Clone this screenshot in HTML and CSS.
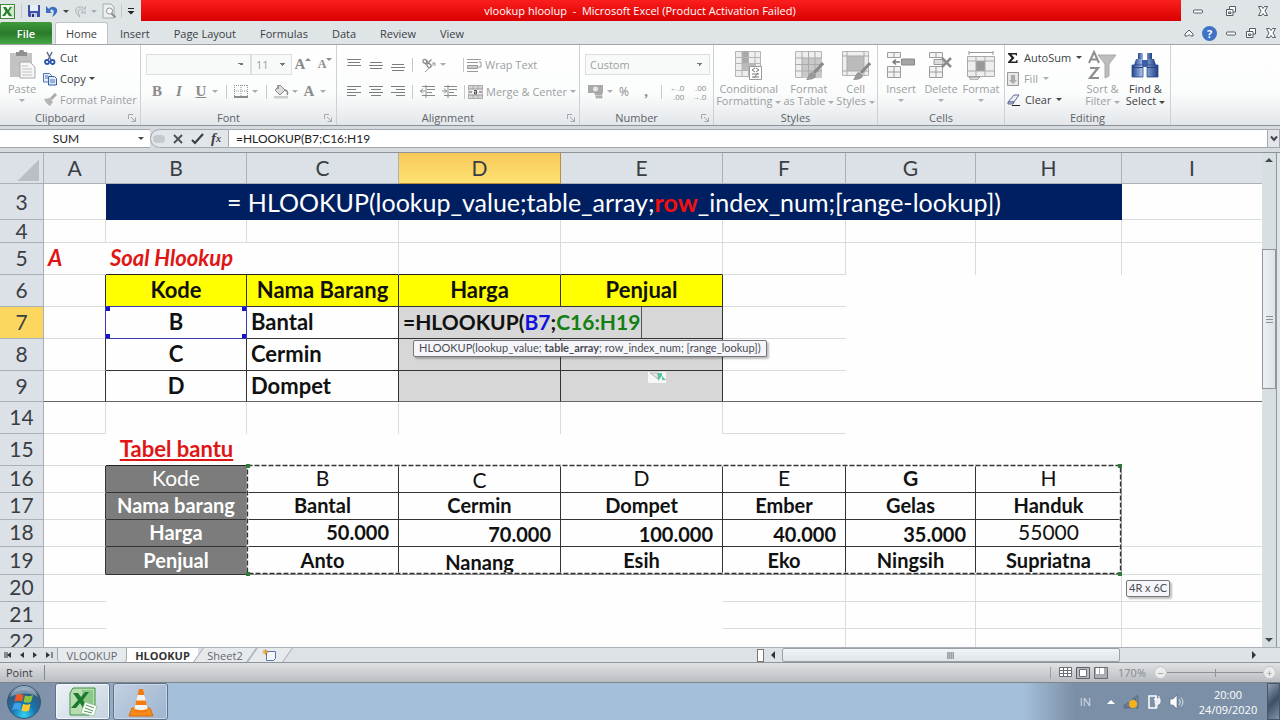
FILE: index.html
```html
<!DOCTYPE html>
<html>
<head>
    <meta charset="utf-8">
    <title>vlookup hloolup - Microsoft Excel</title>
    <link rel="stylesheet" href="styles.css">
</head>
<body>
    <svg class="defs">
        <defs>
            <symbol id="min" viewBox="0 0 12 12"><rect x="1.5" y="5" width="9" height="3" rx="1" fill="#fff" stroke="#555b63"/></symbol>
            <symbol id="restore" viewBox="0 0 12 12"><path d="M4.500 1.500h6v5.500h-6z" fill="#fff" stroke="#555b63"/><path d="M1.500 4.500h6.500v6H1.500zM3.500 7h2.500v1.500H3.500z" fill="#fff" stroke="#555b63"/></symbol>
            <symbol id="close" viewBox="0 0 12 12"><path d="M1.500 1.500h3L6 3.500l1.500-2h3L8 6l2.500 4.500h-3L6 8.500l-1.500 2h-3L4 6z" fill="#fff" stroke="#555b63"/></symbol>
            <symbol id="launch" viewBox="0 0 8 8"><path d="M.5 5V.5H5M3 3l4 4M7.500 3.500v4h-4" fill="none" stroke="#a5a9ae"/></symbol>
            <linearGradient id="bino" x1="0" x2="1" y1="0" y2="0"><stop offset="0" stop-color="#24448c"/><stop offset=".4" stop-color="#a9c4ee"/><stop offset="1" stop-color="#1f3f86"/></linearGradient>
            <radialGradient id="orb" cx=".5" cy=".9" r=".9"><stop offset="0" stop-color="#35d3f5"/><stop offset=".4" stop-color="#1673ad"/><stop offset=".8" stop-color="#34597c"/><stop offset="1" stop-color="#b4c8d8"/></radialGradient>
        </defs>
    </svg>

    <!-- title bar -->
    <div class="titlebar">
        <div class="quick">
            <svg width="16" height="16" viewBox="0 0 16 16"><rect x=".5" y="1.500" width="14" height="14" fill="#f4faf2" stroke="#3c8a3a"/><path d="M9 3h5v11H9" fill="#cfe6c8"/><path d="M3 4h3l2 3 2-3h2L9 8.500l3 4.500H9l-2-3-2 3H2l3.500-4.500z" fill="#26802b"/></svg>
            <i class="bar"></i>
            <svg width="14" height="14" viewBox="0 0 14 14"><path d="M1 1h12v12H2L1 12z" fill="#3b4fa8"/><path d="M3 1h8v6H3z" fill="#e8eefb"/><path d="M4 9h6v4H4z" fill="#c5cbe0"/><path d="M5 10h2v3H5z" fill="#26336f"/></svg>
            <svg width="12" height="14" viewBox="0 0 12 14"><path d="M0 2v7h6L4 7c2-3 5-1 3 4l-1 2c6-3 7-9 2-10-2-.5-4 .5-5 2z" fill="#3b6fc4"/></svg>
            <i class="caret dark"></i>
            <svg width="12" height="14" viewBox="0 0 12 14"><path d="M12 2v7H7l2-2C7 4 3 5 5 11l1 2C0 9 1 3 5 3c2-.5 4 0 5 2z" fill="#d9dcdf" stroke="#9fa4a9" stroke-width=".7"/></svg>
            <i class="caret"></i>
            <svg width="14" height="16" viewBox="0 0 14 16"><path d="M1 1h8l3 3v11H1z" fill="#eceff0" stroke="#a5a9ad"/><circle cx="7.500" cy="8" r="3" fill="#fff" stroke="#8d9196"/><path d="M9.500 10.500l4 4" stroke="#8d9196" stroke-width="2"/></svg>
            <i class="bar"></i>
            <svg width="8" height="8" viewBox="0 0 8 8"><path d="M1 1.500h6" stroke="#222"/><path d="M.5 4h7L4 7.500z" fill="#222"/></svg>
        </div>
        <div class="title">vlookup hloolup&nbsp; -&nbsp; Microsoft Excel (Product Activation Failed)</div>
        <div class="winbtns">
            <button><svg width="12" height="12"><use href="#min"/></svg></button>
            <button><svg width="12" height="12"><use href="#restore"/></svg></button>
            <button><svg width="12" height="12"><use href="#close"/></svg></button>
        </div>
    </div>

    <!-- ribbon tabs -->
    <div class="tabs">
        <button class="file">File</button>
        <button class="tab active">Home</button>
        <button class="tab">Insert</button>
        <button class="tab">Page Layout</button>
        <button class="tab">Formulas</button>
        <button class="tab">Data</button>
        <button class="tab">Review</button>
        <button class="tab">View</button>
        <div class="docbtns">
            <button><svg width="10" height="10" viewBox="0 0 10 10"><path d="M1 6l4-4 4 4v2H6.500L5 6.500 3.500 8H1z" fill="#fff" stroke="#555b63"/></svg></button>
            <button class="help">?</button>
            <button><svg width="12" height="12"><use href="#min"/></svg></button>
            <button><svg width="12" height="12"><use href="#restore"/></svg></button>
            <button><svg width="12" height="12"><use href="#close"/></svg></button>
        </div>
    </div>

    <div class="ribbon">
        <div class="group clipboard">
            <div class="gbody">
                <button class="big off">
                    <svg width="28" height="30" viewBox="0 0 28 30"><path d="M2 3h22v24H2z" fill="#c3c3c3"/><path d="M8 2h3c0-3 5-3 5 0h3v4H8z" fill="#909090"/><path d="M12 12h10l5 5v11H12z" fill="#f6f6f6" stroke="#a9a9a9"/><path d="M14 16h6M14 19h10M14 22h10M14 25h10" stroke="#c0c0c0"/></svg>
                    <span>Paste</span><i class="caret"></i>
                </button>
                <div class="stack">
                    <button class="small"><svg width="14" height="14" viewBox="0 0 14 14"><path d="M4 1l4 8M9 1L5 9" stroke="#5b6f8e" stroke-width="1.500"/><circle cx="4" cy="11" r="2" fill="none" stroke="#2a55a8" stroke-width="1.800"/><circle cx="9.500" cy="11" r="2" fill="none" stroke="#2a55a8" stroke-width="1.800"/></svg>Cut</button>
                    <button class="small"><svg width="14" height="14" viewBox="0 0 14 14"><path d="M.5 1.500h6l2 2V10h-8z" fill="#e7effb" stroke="#4b76b8"/><path d="M5.500 4.500h6l2 2V13h-8z" fill="#dfe9f9" stroke="#335fa6"/><path d="M7 8h5M7 10h5M2 4h3M2 6h3" stroke="#4b76b8"/></svg>Copy<i class="caret"></i></button>
                    <button class="small off"><svg width="14" height="14" viewBox="0 0 14 14"><path d="M13 1L8 6" stroke="#aaa" stroke-width="3"/><path d="M1 6l6-1 3 4-3 4c-2-1-4-3-6-7z" fill="#b5b5b5"/></svg>Format Painter</button>
                </div>
            </div>
            <div class="glabel">Clipboard<svg class="launch" width="8" height="8"><use href="#launch"/></svg></div>
        </div>

        <div class="group font">
            <div class="gbody rows">
                <div class="row">
                    <select class="w-font" aria-label="Font"><option></option></select>
                    <select class="w-size" aria-label="Font size"><option>11</option></select>
                    <button class="ic serif">A<svg width="6" height="16" viewBox="0 0 6 16"><path d="M0 4l3-3 3 3z" fill="#8b8b8b"/></svg></button>
                    <button class="ic serif less">A<svg width="6" height="16" viewBox="0 0 6 16"><path d="M0 1h6L3 4z" fill="#8b8b8b"/></svg></button>
                </div>
                <div class="row">
                    <button class="ic serif">B</button>
                    <button class="ic serif it">I</button>
                    <button class="ic serif un">U</button>
                    <i class="caret"></i><i class="bar"></i>
                    <button class="ic"><svg width="14" height="13" viewBox="0 0 14 13"><path d="M.5 0v12M7 0v12M13.500 0v12M0 .5h14M0 6h14" stroke="#999" stroke-dasharray="1 1"/><path d="M0 12h14" stroke="#666" stroke-width="1.500"/></svg></button>
                    <i class="caret"></i><i class="bar"></i>
                    <button class="ic"><svg width="16" height="15" viewBox="0 0 16 15"><path d="M2 6l5-5 5 5-5 5z" fill="#ddd" stroke="#888"/><path d="M5 5V1M12 6c3 1 3 3 2 5" fill="none" stroke="#888" stroke-width="1.500"/><path d="M1 12h14v2.500H1z" fill="#ccc"/></svg></button>
                    <i class="caret"></i>
                    <button class="ic serif plain">A</button>
                    <i class="caret"></i>
                </div>
            </div>
            <div class="glabel">Font<svg class="launch" width="8" height="8"><use href="#launch"/></svg></div>
        </div>

        <div class="group align">
            <div class="gbody rows">
                <div class="row">
                    <button class="ic"><svg width="14" height="13" viewBox="0 0 14 13"><path d="M0 1.500h14M1 4.500h12M0 7.500h14" stroke="#7d7d7d"/></svg></button>
                    <button class="ic"><svg width="14" height="13" viewBox="0 0 14 13"><path d="M1 4.500h12M0 7.500h14M1 10.500h12" stroke="#7d7d7d"/></svg></button>
                    <button class="ic"><svg width="14" height="13" viewBox="0 0 14 13"><path d="M1 6.500h12M0 9.500h14M1 12.500h12" stroke="#7d7d7d"/></svg></button>
                    <i class="bar"></i>
                    <button class="ic orient"><svg width="16" height="16" viewBox="0 0 16 16"><g fill="none" stroke="#8a8a8a" stroke-width="1.300"><ellipse cx="4" cy="4.500" rx="2.300" ry="1.800" transform="rotate(45 4 4.500)"/><path d="M6.500 3.500L4.500 7.500"/><ellipse cx="8" cy="8.500" rx="2.300" ry="1.800" transform="rotate(45 8 8.500)"/><path d="M10.500 2.500L7 6"/></g><path d="M4 15l10-9M11 6h3v3" stroke="#999" fill="none"/></svg><i class="caret"></i></button>
                    <i class="bar"></i>
                    <button class="small off"><svg width="15" height="14" viewBox="0 0 15 14"><path d="M0 1.500h14M0 4.500h11" stroke="#999"/><path d="M.5 7.500h10v3H.5z" fill="#ccc" stroke="#999"/><path d="M0 13.500h11M11 9h3V4h-2" stroke="#999" fill="none"/></svg>Wrap Text</button>
                </div>
                <div class="row">
                    <button class="ic"><svg width="14" height="13" viewBox="0 0 14 13"><path d="M0 1.500h14M0 4.500h9M0 7.500h14M0 10.500h9" stroke="#7d7d7d"/></svg></button>
                    <button class="ic"><svg width="14" height="13" viewBox="0 0 14 13"><path d="M0 1.500h14M2 4.500h10M0 7.500h14M2 10.500h10" stroke="#7d7d7d"/></svg></button>
                    <button class="ic"><svg width="14" height="13" viewBox="0 0 14 13"><path d="M0 1.500h14M5 4.500h9M0 7.500h14M5 10.500h9" stroke="#7d7d7d"/></svg></button>
                    <i class="bar"></i>
                    <button class="ic indent"><svg width="15" height="13" viewBox="0 0 15 13"><path d="M2 1.500h13M7 4.500h8M7 7.500h5M2 10.500h13M6 0v13M0 6h5M3 3.500L.5 6 3 8.500" stroke="#8a8a8a" fill="none"/></svg></button>
                    <button class="ic indent"><svg width="15" height="13" viewBox="0 0 15 13"><path d="M2 1.500h13M7 4.500h8M7 7.500h5M2 10.500h13M6 0v13M0 6h5M2 3.500L4.500 6 2 8.500" stroke="#8a8a8a" fill="none"/></svg></button>
                    <i class="bar"></i>
                    <button class="small off"><svg width="15" height="14" viewBox="0 0 15 14"><path d="M.5.500h14v13H.5z" fill="#d5d5d5" stroke="#aaa"/><path d="M5 0v4M10 0v4M5 10v4M10 10v4" stroke="#aaa"/><path d="M0 4h15v6H0z" fill="#eee" stroke="#999"/><path d="M6 5.500h2.500V9H6.500V7h2M1 7h3M11 7h3" stroke="#555" fill="none"/></svg>Merge &amp; Center<i class="caret"></i></button>
                </div>
            </div>
            <div class="glabel">Alignment<svg class="launch" width="8" height="8"><use href="#launch"/></svg></div>
        </div>

        <div class="group number">
            <div class="gbody rows">
                <div class="row"><select class="w-num" aria-label="Number format"><option>Custom</option></select></div>
                <div class="row">
                    <button class="ic"><svg width="16" height="15" viewBox="0 0 16 15"><path d="M0 1h15v8H0z" fill="#aaa"/><circle cx="7.500" cy="5" r="2.500" fill="#e5e5e5"/><path d="M7 9h7v2H7zM8 12h6v2H8z" fill="#bbb" stroke="#888" stroke-width=".5"/></svg></button>
                    <i class="caret"></i>
                    <button class="ic pct">%</button>
                    <button class="ic serif">,</button>
                    <i class="bar"></i>
                    <button class="ic dec">←.0<br>.00</button>
                    <button class="ic dec">.00<br>→.0</button>
                </div>
            </div>
            <div class="glabel">Number<svg class="launch" width="8" height="8"><use href="#launch"/></svg></div>
        </div>

        <div class="group styles">
            <div class="gbody">
                <button class="big off">
                    <svg width="30" height="30" viewBox="0 0 30 30"><path d="M1.500 1.500h25v25h-25z" fill="#eee" stroke="#b5b5b5"/><path d="M8 1h6v12H8z" fill="#a9a9a9"/><path d="M8 13h14v7H8z" fill="#bbb"/><path d="M1 7.500h26M1 13.500h26M1 20.500h26M8 1v26M14.500 1v26M21 1v26" stroke="#b5b5b5"/><path d="M15.500 16.500h12v13h-12z" fill="#fff" stroke="#999"/><path d="M21 18l-3 2 3 2M22 18l3 2-3 2M18 24h7M18 27h7M24 23l-4 5" stroke="#777" fill="none"/></svg>
                    <span>Conditional<br>Formatting <i class="caret"></i></span>
                </button>
                <button class="big off">
                    <svg width="30" height="30" viewBox="0 0 30 30"><path d="M1.500 1.500h26v26h-26z" fill="#eee" stroke="#b5b5b5"/><path d="M8 8h20v20H8z" fill="#c9c9c9"/><path d="M1 8h27M1 14.500h27M1 21h27M8 1v27M14.500 1v27M21 1v27" stroke="#aaa"/><path d="M29 13L20 23" stroke="#888" stroke-width="3"/><path d="M12 30c2-2 2-7 6-8l4 3c0 4-5 5-10 5z" fill="#999"/></svg>
                    <span>Format<br>as Table <i class="caret"></i></span>
                </button>
                <button class="big off">
                    <svg width="30" height="30" viewBox="0 0 30 30"><path d="M1.500 1.500h26v24h-26z" fill="#eee" stroke="#b5b5b5"/><path d="M6 6h17v15H6z" fill="#bbb"/><path d="M1 6h27M1 21h27M6 1v25M23 1v25" stroke="#aaa"/><path d="M29 13L20 23" stroke="#888" stroke-width="3"/><path d="M12 30c2-2 2-7 6-8l4 3c0 4-5 5-10 5z" fill="#999"/></svg>
                    <span>Cell<br>Styles <i class="caret"></i></span>
                </button>
            </div>
            <div class="glabel">Styles</div>
        </div>

        <div class="group cells">
            <div class="gbody">
                <button class="big off">
                    <svg width="30" height="30" viewBox="0 0 30 30"><path d="M1.500 2.500h13v5h-13zM8 2.500v5M1.500 16.500h13v11h-13zM8 16.500v11M1.500 22h13" fill="#f2f2f2" stroke="#9c9c9c"/><path d="M15.500 9h13v6h-13z" fill="#a5a5a5" stroke="#888"/><path d="M7 12h7M10 9.500L7 12l3 2.500" stroke="#777" fill="none" stroke-width="1.500"/></svg>
                    <span>Insert</span><i class="caret"></i>
                </button>
                <button class="big off">
                    <svg width="30" height="30" viewBox="0 0 30 30"><path d="M3.500 2.500h13v5h-13zM10 2.500v5M3.500 16.500h13v11h-13zM10 16.500v11M3.500 22h13" fill="#f2f2f2" stroke="#9c9c9c"/><path d="M8 9.500h9v5H8z" fill="#ddd" stroke="#999"/><path d="M16 8l9 9M25 8l-9 9" stroke="#8b8b8b" stroke-width="2.500"/></svg>
                    <span>Delete</span><i class="caret"></i>
                </button>
                <button class="big off">
                    <svg width="30" height="30" viewBox="0 0 30 30"><path d="M3 1v4M3 2.500h24M27 1v4" stroke="#999"/><path d="M1.500 6.500h27v20h-27z" fill="#eee" stroke="#aaa"/><path d="M10 11h9v10h-9z" fill="#999"/><path d="M1 11h27M1 21h27M10 6v20M19 6v20" stroke="#aaa"/><path d="M3 27h11l-3 3H5z" fill="#ddd" stroke="#999"/></svg>
                    <span>Format</span><i class="caret"></i>
                </button>
            </div>
            <div class="glabel">Cells</div>
        </div>

        <div class="group editing">
            <div class="gbody">
                <div class="stack">
                    <button class="small"><svg width="12" height="12" viewBox="0 0 12 12"><path d="M1 1h9v2.500H9L8.500 2.500H4.500L7.500 6l-3.500 3.500h5L9.500 8h1v3H1v-1l3.500-4L1 2z" fill="#222"/></svg>AutoSum<i class="caret"></i></button>
                    <button class="small off"><svg width="12" height="14" viewBox="0 0 12 14"><path d="M.5.500h11v13H.5z" fill="#e6e6e6" stroke="#999"/><path d="M4 3h4v5h2l-4 4-4-4h2z" fill="#aaa"/></svg>Fill<i class="caret"></i></button>
                    <button class="small"><svg width="13" height="13" viewBox="0 0 13 13"><path d="M1 9l6-7h5L7 9z" fill="#e9edf8" stroke="#5e6b94"/><path d="M1 9v2h5l1-2z" fill="#c2cae4" stroke="#5e6b94"/><path d="M5 12.500h8" stroke="#222"/></svg>Clear<i class="caret"></i></button>
                </div>
                <button class="big off">
                    <svg width="30" height="30" viewBox="0 0 30 30"><path d="M11 5h18l-7 9v12l-4 2V14z" fill="#bdbdbd" stroke="#aaa"/><path d="M2 13L7 2l5 11M4 9.500h6" fill="none" stroke="#8e8e8e" stroke-width="2"/><path d="M3 18h8L3 28h9" fill="none" stroke="#8e8e8e" stroke-width="2.200"/></svg>
                    <span>Sort &amp;<br>Filter <i class="caret"></i></span>
                </button>
                <button class="big">
                    <svg width="30" height="30" viewBox="0 0 30 30"><path d="M8 3h5v6H8zM17 3h5v6h-5z" fill="url(#bino)"/><path d="M6 9h7v6H4zM17 9h7l2 6h-9z" fill="url(#bino)"/><path d="M12 10h6v7h-6z" fill="#3d5fa8"/><path d="M2 15h11v12H2zM17 15h11v12H17z" fill="url(#bino)" stroke="#2b478a" stroke-width=".8"/><path d="M2 17.500h11M17 17.500h11" stroke="#24407f"/></svg>
                    <span>Find &amp;<br>Select <i class="caret"></i></span>
                </button>
            </div>
            <div class="glabel">Editing</div>
        </div>
    </div>

    <!-- formula bar -->
    <div class="formula">
        <input class="namebox" value="SUM" aria-label="Name box">
        <button class="drop"><i class="caret dark"></i></button>
        <div class="fbtns">
            <i class="knob"></i>
            <button><svg width="12" height="12" viewBox="0 0 12 12"><path d="M2 2l8 8M10 2L2 10" stroke="#4a4e54" stroke-width="1.800"/></svg></button>
            <button><svg width="13" height="12" viewBox="0 0 13 12"><path d="M1 7l3 3 8-9" stroke="#3c4046" stroke-width="2.200" fill="none"/></svg></button>
            <button class="fx">f<sub>x</sub></button>
        </div>
        <input class="fx-input" value="=HLOOKUP(B7;C16:H19" aria-label="Formula bar">
        <button class="expand"><svg width="8" height="8" viewBox="0 0 8 8"><path d="M1 1.500L4 5l3-3.500" stroke="#3f444b" stroke-width="2" fill="none"/></svg></button>
    </div>

    <!-- sheet -->
    <div class="sheetarea">
        <div class="sheet">
            <table>
                <colgroup><col class="c0"><col class="ca"><col class="cb"><col class="cc"><col class="cd"><col class="ce"><col class="cf"><col class="cg"><col class="ch"><col></colgroup>
                <tr class="head"><th class="corner"></th><th>A</th><th>B</th><th>C</th><th class="on">D</th><th>E</th><th>F</th><th>G</th><th>H</th><th class="last">I</th></tr>
                <tr class="h36"><th>3</th><td class="b"></td><td colspan="7" class="navy">= HLOOKUP(lookup_value;table_array;<b>row</b>_index_num;[range-lookup])</td><td class="b"></td></tr>
                <tr class="h23"><th>4</th><td class="r b"></td><td class="r b"></td><td class="r b"></td><td class="r b"></td><td class="r b"></td><td class="r b"></td><td class="r b"></td><td class="r b"></td><td class="b"></td></tr>
                <tr class="h32"><th>5</th><td class="b red l">A</td><td class="kb red l">Soal&nbsp;Hlookup</td><td class="r kb"></td><td class="r kb"></td><td class="r kb"></td><td class="r b"></td><td class="r"></td><td class="r"></td><td></td></tr>
                <tr class="h32 y"><th>6</th><td class="b kr"></td><td class="k">Kode</td><td class="k">Nama Barang</td><td class="k">Harga</td><td class="k">Penjual</td><td class="b"></td><td></td><td></td><td></td></tr>
                <tr class="h32"><th class="on">7</th><td class="b kr"></td><td class="k ref">B<i></i></td><td class="k l">Bantal</td><td class="k gray edit"><div class="editor">=HLOOKUP(<span class="blue">B7</span>;<span class="green">C16:H19</span></div></td><td class="k gray"></td><td class="b"></td><td></td><td></td><td></td></tr>
                <tr class="h32"><th>8</th><td class="b kr"></td><td class="k">C</td><td class="k l">Cermin</td><td class="k gray"></td><td class="k gray"></td><td class="b"></td><td></td><td></td><td></td></tr>
                <tr class="h31 freeze"><th>9</th><td class="kr"></td><td class="k">D</td><td class="k l">Dompet</td><td class="k gray"></td><td class="k gray"></td><td></td><td></td><td></td><td></td></tr>
                <tr class="h32"><th>14</th><td class="r b"></td><td class="r"></td><td class="r"></td><td class="r"></td><td class="r"></td><td class="b"></td><td></td><td></td><td></td></tr>
                <tr class="h32"><th>15</th><td class="b"></td><td class="kb tabel">Tabel bantu</td><td></td><td></td><td></td><td></td><td></td><td></td><td></td></tr>
                <tr class="h27 n"><th>16</th><td class="b kr"></td><td class="k dk">Kode</td><td class="k">B</td><td class="k low">C</td><td class="k">D</td><td class="k">E</td><td class="k"><b>G</b></td><td class="k">H</td><td></td></tr>
                <tr class="h27"><th>17</th><td class="b kr"></td><td class="k dk">Nama barang</td><td class="k">Bantal</td><td class="k">Cermin</td><td class="k">Dompet</td><td class="k">Ember</td><td class="k">Gelas</td><td class="k">Handuk</td><td></td></tr>
                <tr class="h27"><th>18</th><td class="b kr"></td><td class="k dk">Harga</td><td class="k num">50.000</td><td class="k num low">70.000</td><td class="k num low">100.000</td><td class="k num low">40.000</td><td class="k num low">35.000</td><td class="k thin">55000</td><td class="b"></td></tr>
                <tr class="h28"><th>19</th><td class="b kr"></td><td class="k dk">Penjual</td><td class="k">Anto</td><td class="k low">Nanang</td><td class="k">Esih</td><td class="k">Eko</td><td class="k">Ningsih</td><td class="k">Supriatna</td><td class="b"></td></tr>
                <tr class="h27"><th>20</th><td class="b"></td><td></td><td></td><td></td><td></td><td class="r b"></td><td class="r b"></td><td class="r b"></td><td class="b"></td></tr>
                <tr class="h27"><th>21</th><td class="b"></td><td></td><td></td><td></td><td></td><td class="r b"></td><td class="r b"></td><td class="r b"></td><td class="b"></td></tr>
                <tr class="h27"><th>22</th><td></td><td></td><td></td><td></td><td></td><td class="r"></td><td class="r"></td><td class="r"></td><td></td></tr>
            </table>
            <!-- marching ants round C16:H19 -->
            <svg class="ants" width="876" height="112"><rect x="1.500" y="1.500" width="873" height="108" fill="none" stroke="#fff" stroke-width="2"/><rect x="1.500" y="1.500" width="873" height="108" fill="none" stroke="#333" stroke-width="1.300" stroke-dasharray="5 2"/><path d="M0 0h4v4H0zM872 0h4v4h-4zM0 108h4v4H0zM872 108h4v4h-4z" fill="#2d7a3a"/></svg>
            <div class="tip hint">HLOOKUP(lookup_value; <b>table_array</b>; row_index_num; [range_lookup])</div>
            <svg class="cursor" width="19" height="13" viewBox="0 0 19 13"><path d="M0 1h18v11H0z" fill="#f4f7f5"/><path d="M2 2h8v6z" fill="#e3e6e4" stroke="#9aa59f" stroke-width=".7"/><path d="M9 2h5v3l4 4h-4v-4l-4 5V4z" fill="#5cc4a0"/></svg>
            <div class="tip size">4R x 6C</div>
        </div>
        <div class="vscroll">
            <svg width="10" height="8" viewBox="0 0 10 8"><path d="M1 6l4-4 4 4z" fill="#444a52"/></svg>
            <div class="vtrack"><div class="vthumb"><i></i></div></div>
            <svg width="10" height="8" viewBox="0 0 10 8"><path d="M1 2l4 4 4-4z" fill="#444a52"/></svg>
        </div>
    </div>

    <!-- sheet tabs -->
    <div class="sheettabs">
        <div class="nav">
            <button><svg width="8" height="8" viewBox="0 0 8 8"><path d="M1 1v6M3 1v6" stroke="#333"/><path d="M7 1v6L3 4z" fill="#333"/></svg></button>
            <button><svg width="8" height="8" viewBox="0 0 8 8"><path d="M6 1v6L2 4z" fill="#333"/></svg></button>
            <button><svg width="8" height="8" viewBox="0 0 8 8"><path d="M2 1v6l4-3z" fill="#333"/></svg></button>
            <button><svg width="8" height="8" viewBox="0 0 8 8"><path d="M7 1v6" stroke="#333"/><path d="M1 1v6l4-3z" fill="#333"/></svg></button>
        </div>
        <button class="stab">VLOOKUP</button>
        <button class="stab active">HLOOKUP</button>
        <button class="stab slant">Sheet2</button>
        <button class="stab slant new"><svg width="16" height="12" viewBox="0 0 16 12"><path d="M4.500 2.500h9v7l-2 2h-7z" fill="#f2f6fd" stroke="#5b76a8"/><path d="M3.500 0v6M.5 3h6M1.500 1l4 4M5.500 1l-4 4" stroke="#e39a2e"/></svg></button>
        <div class="hscroll">
            <i class="split"></i>
            <svg width="8" height="10" viewBox="0 0 8 10"><path d="M6 1v8L2 5z" fill="#333"/></svg>
            <div class="htrack"><div class="hthumb"><i></i></div></div>
            <svg width="8" height="10" viewBox="0 0 8 10"><path d="M2 1v8l4-4z" fill="#333"/></svg>
        </div>
    </div>

    <div class="status">
        <span class="mode">Point</span>
        <div class="views">
            <button><svg width="13" height="11" viewBox="0 0 13 11"><path d="M.5.500h12v9H.5zM.5 3.500h12M.5 6.500h12M4.500 0v10M8.500 0v10" fill="#fff" stroke="#6a6e73"/></svg></button>
            <button><svg width="14" height="12" viewBox="0 0 14 12"><path d="M.5.500h13v11H.5z" fill="#b9bcc0" stroke="#5c6065"/><path d="M3.500 2.500h7v7h-7z" fill="#fff" stroke="#6a6e73"/></svg></button>
            <button><svg width="14" height="12" viewBox="0 0 14 12"><path d="M.5.500h13v11H.5z" fill="#a9acb0" stroke="#6a6e73"/><path d="M2 1h3v6H2zM6 1h4v6H6z" fill="#fff"/></svg></button>
        </div>
        <span class="pct170">170%</span>
        <div class="zoom"><button>−</button><input type="range" min="0" max="100" value="50" aria-label="Zoom"><button>+</button></div>
    </div>

    <div class="taskbar">
        <button class="start"><svg width="36" height="36" viewBox="0 0 36 36"><circle cx="18" cy="18" r="16.500" fill="url(#orb)" stroke="#3b5670"/><path d="M10 11c3-1.500 5-1 7.500 0l-1.500 6.500c-2.500-1-5-1-7.500.500z" fill="#ee5a26"/><path d="M19 11.500c3 1 5 1 8-.5l-2 7c-2.500 1-5 1-7.500 0z" fill="#8cc63e"/><path d="M8 19.500c3-1.200 5-1 7.500 0L14 26c-2.500-1-5-1-8 .5z" fill="#3fa0e8"/><path d="M17 20c3 1 5 1 7.500 0L23 26.500c-3 1.500-5 1-7.500 0z" fill="#fdc92e"/><path d="M4 13C8 1 28 1 32 13 24 8 12 9 4 13z" fill="#fff" opacity=".35"/></svg></button>
        <button class="task"><svg width="30" height="30" viewBox="0 0 30 30"><path d="M5 1h22v22l-6 5H2V6z" fill="#b8ddb0" stroke="#3c9140"/><path d="M14 3h11v18H14z" fill="#8cc887"/><path d="M5 6h5l3 4 4-5h4l-6 8 5 8h-5l-3-5-4 5H3l7-8z" fill="#1b7a2c"/><path d="M17 15l12 4-3 10-13-3z" fill="#fff" stroke="#8abb88" stroke-width=".7"/><path d="M18 18l8 3M17 21l8 3M16 24l8 2" stroke="#4a9a4d"/></svg></button>
        <button class="task vlc"><svg width="26" height="30" viewBox="0 0 26 30"><path d="M4 21h18l3 8H1z" fill="#f58a1d" stroke="#d76d0c"/><path d="M11 2h4l5 22c-4 2-10 2-14 0z" fill="#f47b12"/><path d="M9.600 8h6.800l1.300 5.500H8.300zM7.300 18h11.400l.9 4c-4 1.500-9 1.500-13.200 0z" fill="#f3f3f3"/></svg></button>
        <div class="tray">
            <span class="lang">IN</span>
            <svg width="8" height="6" viewBox="0 0 8 6"><path d="M0 5l4-4 4 4z" fill="#fff"/></svg>
            <svg width="16" height="14" viewBox="0 0 16 14"><path d="M1 10h2v3H1zM4 8h2v5H4zM7 6h2v7H7zM10 3h2v10h-2zM13 1h2v12h-2z" fill="#8494a6" stroke="#3f4f62" stroke-width=".6"/><circle cx="10" cy="9" r="4" fill="#f6b21b"/></svg>
            <svg width="14" height="16" viewBox="0 0 14 16"><path d="M2 2h7v12H2z" fill="#8192a6" stroke="#fff" stroke-width="1.500"/><path d="M7 5h6v3c0 3-5 3-5 0M9 2v3M12 2v3M10 10v4" stroke="#fff" fill="#e8edf2"/></svg>
            <svg width="16" height="14" viewBox="0 0 16 14"><path d="M1 4h3l4-4v14l-4-4H1z" fill="#fff" stroke="#53647a" stroke-width=".6"/><path d="M10 4c1.500 2 1.500 4 0 6M12 2.500c2.500 3 2.500 6 0 9" stroke="#dde5ee" fill="none"/></svg>
            <div class="clock"><span>20:00</span><span>24/09/2020</span></div>
            <button class="desk"></button>
        </div>
    </div>
</body>
</html>
```

FILE: styles.css
```css
* {
    box-sizing: border-box;
}
body {
    margin: 0;
    height: 100vh;
    display: flex;
    flex-direction: column;
    overflow: hidden;
    font-family: "Open Sans", sans-serif;
    font-size: 11px;
    color: #3b3f45;
    background: #dfe4e7;
}
button {
    font: inherit;
    color: inherit;
    border: none;
    background: none;
    padding: 0;
    margin: 0;
    display: flex;
    align-items: center;
    justify-content: center;
}
select, input {
    font: inherit;
    color: inherit;
    margin: 0;
    border-radius: 0;
}
svg {
    flex: none;
}
.defs {
    position: absolute;
    width: 0;
    height: 0;
}
.caret {
    display: inline-block;
    flex: none;
    width: 0;
    height: 0;
    border: 3px solid transparent;
    border-top-color: #a9adb1;
    border-bottom: none;
    vertical-align: middle;
}
.caret.dark, .small:not(.off) .caret, .big:not(.off) .caret {
    border-top-color: #444;
}
.bar {
    flex: none;
    width: 1px;
    height: 14px;
    background: #c5c9cc;
}

/* title bar */
.titlebar {
    display: flex;
    height: 22px;
    flex: none;
}
.quick {
    width: 141px;
    display: flex;
    align-items: center;
    gap: 5px;
}
.title {
    flex: 1;
    height: 21px;
    line-height: 21px;
    text-align: center;
    padding-right: 42px;
    color: #fff;
    background: linear-gradient(#fb1e1e, #d90000);
}
.winbtns {
    width: 99px;
    display: flex;
    align-items: center;
    justify-content: space-between;
    padding: 0 11px;
}

/* ribbon tabs */
.tabs {
    display: flex;
    height: 22px;
    flex: none;
}
.file {
    width: 52px;
    margin-right: 3px;
    color: #fff;
    font-weight: 600;
    background: linear-gradient(#3f9a3b, #2a7a2b 50%, #45a744);
    border-radius: 2px 2px 0 0;
}
.tab {
    padding: 0 12px;
}
.tab.active {
    width: 53px;
    padding: 0;
    background: #fff;
    border: 1px solid #c0c5ca;
    border-bottom: none;
    border-radius: 3px 3px 0 0;
}
.docbtns {
    margin-left: auto;
    display: flex;
    align-items: center;
    gap: 8px;
    padding-right: 3px;
}
.help {
    width: 15px;
    height: 15px;
    border-radius: 50%;
    background: #3f74c4;
    color: #fff;
    font-weight: bold;
}

/* ribbon */
.ribbon {
    display: flex;
    height: 82px;
    flex: none;
    border-top: 1px solid #9fa4a9;
    border-bottom: 1px solid #8d9399;
    background: linear-gradient(#fff, #fbfcfc 60%, #e3e7ea);
}
.group {
    display: flex;
    flex-direction: column;
    border-right: 1px solid #cdd1d5;
}
.clipboard { width: 141px; }
.font { width: 196px; }
.align { width: 243px; }
.number { width: 134px; }
.styles { width: 164px; }
.cells { width: 127px; }
.editing { width: 166px; }
.gbody {
    height: 65px;
    display: flex;
    justify-content: center;
}
.glabel {
    height: 15px;
    line-height: 15px;
    text-align: center;
    padding-right: 20px;
    color: #5d6268;
    position: relative;
}
.styles .glabel, .cells .glabel, .editing .glabel {
    padding: 0;
}
.launch {
    position: absolute;
    right: 4px;
    top: 4px;
}
.big {
    flex-direction: column;
    justify-content: flex-start;
    padding: 5px 3px 0;
    line-height: 12px;
    white-space: nowrap;
}
.styles .big {
    padding: 5px 1px 0;
}
.big span {
    margin: 3px 0 4px;
}
.clipboard .gbody {
    justify-content: flex-start;
    padding-left: 5px;
    gap: 4px;
}
.cells .big {
    width: 40px;
}
.off {
    color: #9b9fa3;
}
.stack {
    display: flex;
    flex-direction: column;
    padding-top: 2px;
}
.small {
    height: 21px;
    gap: 3px;
    justify-content: flex-start;
    white-space: nowrap;
}
.editing .small {
    gap: 5px;
}
.rows {
    flex-direction: column;
    justify-content: flex-start;
    padding: 9px 0 0 5px;
    gap: 6px;
}
.row {
    display: flex;
    align-items: center;
    height: 21px;
}
.row select {
    appearance: none;
    height: 21px;
    padding: 0 4px;
    border: 1px solid #dcdfe1;
    color: #9b9fa3;
    background: linear-gradient(45deg, transparent 50%, #777 50%) right 9px center / 3px 3px no-repeat, linear-gradient(-45deg, transparent 50%, #777 50%) right 6px center / 3px 3px no-repeat, #f8f9f9;
}
.w-font { width: 105px; }
.w-size { width: 41px; }
.w-num { width: 125px; }
.ic {
    width: 22px;
    height: 20px;
    color: #8b8b8b;
}
.serif {
    font-family: "Liberation Serif", serif;
    font-weight: bold;
    font-size: 15px;
}
.less { font-size: 12px; }
.it { font-style: italic; }
.un { text-decoration: underline; }
.pct { font-size: 12px; }
.dec {
    font-size: 8px;
    line-height: 9px;
    text-align: right;
}
.font .bar { margin: 0 3px 0 8px; }
.align .bar { margin: 0 3px; }
.orient, .indent + .indent { margin-right: 1px; }
.orient {
    width: 43px;
    justify-content: flex-start;
    padding-left: 5px;
    gap: 3px;
}
.align .rows { padding-left: 6px; }
.number .bar { margin: 0 4px; }

/* formula bar */
.formula {
    height: 27px;
    flex: none;
    display: flex;
    padding: 3px 0 4px;
    background: #d5dade;
    border-bottom: 1px solid #8d9399;
}
.formula input {
    border: 1px solid #a2a8ae;
    border-width: 1px 0;
    background: #fff;
    color: #222;
    font-family: Lato, sans-serif;
    font-size: 12px;
    outline: none;
}
.namebox {
    width: 132px;
    text-align: center;
    padding: 0;
}
.formula .drop {
    width: 18px;
    background: #fff;
    border: 1px solid #a2a8ae;
    border-width: 1px 0;
}
.fbtns {
    width: 79px;
    display: flex;
    align-items: center;
    gap: 7px;
    border: 1px solid #a2a8ae;
    border-radius: 10px 0 0 10px;
    background: #e2e6ea;
}
.knob {
    width: 12px;
    height: 8px;
    margin-left: 2px;
    border-radius: 6px;
    background: #c5cacf;
}
.fx {
    font-family: "Liberation Serif", serif;
    font-style: italic;
    font-weight: bold;
    font-size: 15px;
}
.fx sub {
    font-size: 10px;
}
.fx-input {
    flex: 1;
    padding: 0 7px;
}
.expand {
    width: 13px;
    border: 1px solid #a2a8ae;
    background: #e2e6ea;
}

/* sheet */
.sheetarea {
    flex: 1;
    min-height: 0;
    display: flex;
    background: #fdfefd;
}
.sheet {
    flex: 1;
    position: relative;
    overflow: hidden;
}
table {
    width: 100%;
    table-layout: fixed;
    border-spacing: 0;
    font-family: Lato, sans-serif;
    font-size: 21px;
    line-height: 24px;
    color: #111;
}
.c0 { width: 44px; }
.ca { width: 62px; }
.cb { width: 141px; }
.cc { width: 152px; }
.cd, .ce { width: 162px; }
.cf { width: 123px; }
.cg { width: 130px; }
.ch { width: 146px; }
th, td {
    padding: 0;
    text-align: center;
    white-space: nowrap;
    border: 0 solid #d9dcdd;
}
th {
    font-weight: normal;
    color: #3a3e44;
    background: #dbe1e6;
    border-color: #a9b0b8;
    border-width: 0 1px 1px 0;
}
td {
    font-weight: bold;
}
.head th { height: 31px; }
.h36 > * { height: 36px; }
.h23 > * { height: 23px; line-height: 20px; }
.h32 > * { height: 32px; padding-bottom: 1px; }
.h31 > * { height: 31px; }
.h28 > * { height: 28px; padding-bottom: 2px; }
.h27 > * { height: 27px; padding-bottom: 2px; }
.h32 td, .h31 td {
    font-size: 22px;
}
.h27 td, .h28 td {
    font-size: 20px;
}
.head .last { border-right: none; }
.corner {
    background: linear-gradient(135deg, transparent 50%, #b9bfc4 50%) 18px 7px / 21px 21px no-repeat, #dbe1e6;
}
th.on {
    background: #fbd75f;
}
.head .on {
    background: linear-gradient(#f8c95a, #fde271);
    border-color: #b98f3c;
}
.r { border-right-width: 1px; }
.b { border-bottom-width: 1px; }
.kr { border-right: 1px solid #333; }
.kb { border-bottom: 1px solid #222; }
.k {
    border: 0 solid #333;
    border-width: 0 1px 1px 0;
}
.l {
    text-align: left;
    padding-left: 4px;
}
.freeze td {
    border-bottom: 1px solid #666;
}
.navy {
    background: #001f60;
    color: #fff;
    font-weight: normal;
    font-size: 25px;
}
.navy b {
    color: #f01010;
}
.red, .tabel {
    color: #e01515;
}
.red {
    font-style: italic;
}
.tabel {
    text-decoration: underline;
}
.y .k { background: #ff0; }
.gray { background: #d6d7d6; }
.dk {
    background: #7b7c7b;
    color: #fff;
}
.n td, td.thin {
    font-weight: normal;
    font-size: 21px;
}
.num {
    text-align: right;
    padding-right: 9px;
}
td.low {
    vertical-align: bottom;
    padding-bottom: 0;
}
.ref, .edit {
    position: relative;
}
.ref i {
    position: absolute;
    inset: -1px -1px -1px -1px;
    border: 1px solid #3a3ab0;
    background:
        linear-gradient(#1515c5, #1515c5) 0 0 / 4px 4px no-repeat,
        linear-gradient(#1515c5, #1515c5) 100% 0 / 4px 4px no-repeat,
        linear-gradient(#1515c5, #1515c5) 0 100% / 4px 4px no-repeat,
        linear-gradient(#1515c5, #1515c5) 100% 100% / 4px 4px no-repeat;
}
.editor {
    position: absolute;
    left: 0;
    top: 0;
    height: 31px;
    line-height: 30px;
    padding: 0 1px 0 4px;
    font-size: 21px;
    text-align: left;
    background: #d6d7d6;
    border-right: 1px solid #555;
}
.blue { color: #1111dd; }
.green { color: #128012; }
.ants {
    position: absolute;
    left: 246px;
    top: 311px;
}
.tip {
    position: absolute;
    height: 17px;
    line-height: 14px;
    padding: 0 5px;
    white-space: nowrap;
    font-size: 11px;
    font-family: Lato, sans-serif;
    color: #4c4c52;
    background: #f5f6fa;
    border: 1px solid #767676;
    border-radius: 2px;
    box-shadow: 2px 2px 2px rgba(0, 0, 0, .25);
}
.hint {
    left: 413px;
    top: 187px;
}
.size {
    left: 1126px;
    top: 427px;
    padding: 0 2px;
}
.cursor {
    position: absolute;
    left: 648px;
    top: 218px;
}
.vscroll {
    width: 18px;
    padding: 3px 0;
    display: flex;
    flex-direction: column;
    align-items: center;
    background: linear-gradient(90deg, #d8dfe3 14px, #8f969d 14px, #8f969d 15px, #dfe4e7 15px);
}
.vscroll > svg {
    margin-right: 4px;
}
.vtrack {
    flex: 1;
    width: 100%;
    padding-top: 85px;
}
.vthumb {
    width: 14px;
    height: 140px;
    border: 1px solid #8e959c;
    background: linear-gradient(90deg, #eef1f4, #dde3e8);
    display: flex;
    align-items: center;
    justify-content: center;
}
.vthumb i {
    width: 7px;
    height: 7px;
    background: repeating-linear-gradient(#8b9197 0 1px, transparent 1px 3px);
}

/* sheet tabs */
.sheettabs {
    flex: none;
    height: 16px;
    display: flex;
    background: #dce2e5;
    border-top: 1px solid #a9b0b8;
    border-bottom: 1px solid #8d9399;
}
.nav {
    width: 57px;
    display: flex;
    align-items: center;
    justify-content: space-between;
    padding: 0 4px;
}
.stab {
    width: 70px;
    border: 1px solid #a2a8ae;
    border-width: 0 1px;
    border-radius: 0 0 4px 4px;
    background: #e6eaed;
    color: #63676c;
}
.stab.active {
    width: 71px;
    background: #fff;
    color: #333;
    font-weight: bold;
    border: none;
    border-radius: 0;
}
.slant {
    position: relative;
    z-index: 0;
    width: 54px;
    border: none;
    background: none;
}
.slant::before {
    content: "";
    position: absolute;
    inset: 0;
    z-index: -1;
    background: #e6eaed;
    border-right: 1px solid #a2a8ae;
    border-left: 1px solid #a2a8ae;
    transform: skewX(-35deg);
}
.slant.new {
    width: 36px;
}
.hscroll {
    margin-left: auto;
    width: 523px;
    display: flex;
    align-items: center;
    gap: 5px;
    padding-right: 22px;
}
.split {
    width: 7px;
    height: 13px;
    border: 1px solid #777;
    background: #fff;
}
.htrack {
    flex: 1;
    height: 14px;
}
.hthumb {
    width: 73%;
    height: 14px;
    border: 1px solid #9aa1a8;
    border-radius: 2px;
    background: linear-gradient(#f2f4f6, #dfe4e9);
    display: flex;
    align-items: center;
    justify-content: center;
}
.hthumb i {
    width: 7px;
    height: 7px;
    background: repeating-linear-gradient(90deg, #9ba0a6 0 1px, #b5babf 1px 2px);
}

/* status bar */
.status {
    flex: none;
    height: 20px;
    display: flex;
    align-items: center;
    padding: 0 4px 0 6px;
    background: linear-gradient(#e0e2e4, #b9bdc1);
    border-bottom: 1px solid #7f858b;
}
.mode {
    width: 39px;
    border-right: 1px solid #83888d;
}
.views {
    margin-left: auto;
    display: flex;
    gap: 4px;
    padding-left: 8px;
    border-left: 1px solid #9a9fa4;
}
.pct170 {
    margin: 0 8px 0 10px;
    color: #85898d;
}
.zoom {
    width: 122px;
    display: flex;
    align-items: center;
}
.zoom button {
    flex: none;
    width: 13px;
    height: 13px;
    border: 1px solid #c3c6c9;
    border-radius: 50%;
    background: #ececec;
    color: #999;
    line-height: 10px;
}
.zoom input {
    appearance: none;
    flex: 1;
    min-width: 0;
    height: 8px;
    background: linear-gradient(#8e9296, #8e9296) center / 100% 1px no-repeat;
}
.zoom input::-webkit-slider-thumb {
    appearance: none;
    width: 1px;
    height: 8px;
    background: #8e9296;
}

/* taskbar */
.taskbar {
    flex: none;
    height: 37px;
    display: flex;
    background: linear-gradient(90deg, #7e90a8 0, #8294ac 50px, #a3bfd9 170px, #a3bfd9 80%, #7b8fa6 84%, #7b8fa6);
}
.start {
    width: 48px;
    margin-right: 7px;
}
.task {
    width: 55px;
    height: 37px;
    margin-right: 3px;
    border: 1px solid #5f7289;
    border-radius: 3px;
    background: linear-gradient(135deg, #eef3f7, #c3d2e0);
    box-shadow: inset 0 0 0 1px #f4f8fb;
}
.task.vlc {
    background: linear-gradient(135deg, #c3d1e2, #9db4d0);
    box-shadow: inset 0 0 0 1px #c9d7e6;
}
.tray {
    margin-left: auto;
    display: flex;
    align-items: center;
    gap: 8px;
    color: #fff;
}
.lang {
    margin-right: 8px;
    color: #d5dde6;
}
.clock {
    width: 70px;
    margin-right: -4px;
    display: flex;
    flex-direction: column;
    align-items: center;
    line-height: 15px;
}
.desk {
    width: 13px;
    height: 37px;
    border: 1px solid #44566b;
    background: linear-gradient(135deg, #8fa0b3, #3f5066 50%, #8294a8);
}
```
